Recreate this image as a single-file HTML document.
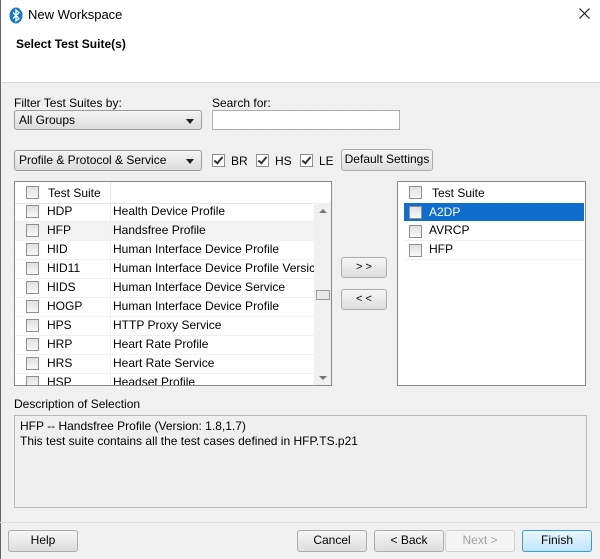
<!DOCTYPE html><html><head><style>
body{margin:0;width:600px;height:559px;overflow:hidden;background:#f0f0f0;font-family:"Liberation Sans",sans-serif;font-size:12px;color:#000;position:relative}
.a{position:absolute}
.btn{position:absolute;border:1px solid #adadad;border-radius:3px;background:linear-gradient(#f6f6f6,#dddddd);text-align:center;box-sizing:border-box;line-height:19px}
.dd{position:absolute;border:1px solid #9a9a9a;border-radius:3px;background:linear-gradient(#f4f4f4,#dcdcdc);box-sizing:border-box;padding-left:4px;line-height:18px}
.dd:after{content:"";position:absolute;right:7px;top:8px;border:4px solid transparent;border-top:5px solid #222;border-bottom:0}
.cb{position:absolute;width:11px;height:11px;border:1px solid #8e8f8f;background:linear-gradient(#e0e0e0,#f8f8f8)}
.ck{position:absolute;width:11px;height:11px;border:1px solid #8e8f8f;background:#fff}
.ck:after{content:"";position:absolute;left:3px;top:0px;width:3px;height:7px;border:solid #333;border-width:0 2px 2px 0;transform:rotate(40deg)}
.row{position:absolute;left:0;width:300px;height:19px;border-bottom:1px solid #f0f0f0;box-sizing:border-box}
.row span{position:absolute;top:1px}
.row .cb{top:2px!important}
</style></head><body>
<div class="a" style="left:0;top:0;width:600px;height:82px;background:#fff;border-bottom:1px solid #d8d8d8"></div>
<svg class="a" style="left:9px;top:7px" width="14" height="17"><ellipse cx="7" cy="8.5" rx="6.5" ry="8" fill="#1a78c8"/><path d="M4 5.5l6 6-3 2.5v-11l3 2.5-6 6" stroke="#fff" stroke-width="1.3" fill="none"/></svg>
<div class="a" style="left:28px;top:7px;font-size:13px">New Workspace</div>
<svg class="a" style="left:579px;top:8px" width="11" height="11"><path d="M0.5 0.5L10.5 10.5M10.5 0.5L0.5 10.5" stroke="#222" stroke-width="1.2"/></svg>
<div class="a" style="left:16px;top:37px;font-weight:bold;font-size:12px">Select Test Suite(s)</div>
<div class="a" style="left:0;top:0;width:1px;height:559px;background:#666"></div>
<div class="a" style="left:14px;top:96px">Filter Test Suites by:</div>
<div class="dd" style="left:14px;top:110px;width:188px;height:20px">All Groups</div>
<div class="a" style="left:212px;top:96px">Search for:</div>
<div class="a" style="left:212px;top:110px;width:188px;height:20px;border:1px solid #abadb3;background:#fff;box-sizing:border-box"></div>
<div class="dd" style="left:14px;top:150px;width:188px;height:21px">Profile &amp; Protocol &amp; Service</div>
<div class="ck" style="left:212px;top:154px"></div><div class="a" style="left:231px;top:154px">BR</div>
<div class="ck" style="left:256px;top:154px"></div><div class="a" style="left:275px;top:154px">HS</div>
<div class="ck" style="left:300px;top:154px"></div><div class="a" style="left:319px;top:154px">LE</div>
<div class="btn" style="left:341px;top:149px;width:92px;height:22px">Default Settings</div>

<div class="a" style="left:14px;top:181px;width:318px;height:205px;border:1px solid #828790;background:#fff;box-sizing:border-box;overflow:hidden">
 <div class="a" style="left:0;top:0;width:316px;height:21px;border-bottom:1px solid #e5e5e5;background:#fff"></div>
 <div class="cb" style="left:11px;top:4px"></div>
 <div class="a" style="left:33px;top:4px">Test Suite</div>
 <div class="a" style="left:95px;top:0;width:1px;height:21px;background:#e5e5e5"></div>
 <div class="a" style="left:0;top:21px;width:300px">
  <div class="row" style="top:0"><div class="cb" style="left:11px;top:3px"></div><span style="left:32px">HDP</span><span style="left:98px">Health Device Profile</span></div>
  <div class="row" style="top:19px;background:#f3f3f3"><div class="cb" style="left:11px;top:3px"></div><span style="left:32px">HFP</span><span style="left:98px">Handsfree Profile</span></div>
  <div class="row" style="top:38px"><div class="cb" style="left:11px;top:3px"></div><span style="left:32px">HID</span><span style="left:98px">Human Interface Device Profile</span></div>
  <div class="row" style="top:57px"><div class="cb" style="left:11px;top:3px"></div><span style="left:32px">HID11</span><span style="left:98px;white-space:nowrap">Human Interface Device Profile Versic</span></div>
  <div class="row" style="top:76px"><div class="cb" style="left:11px;top:3px"></div><span style="left:32px">HIDS</span><span style="left:98px">Human Interface Device Service</span></div>
  <div class="row" style="top:95px"><div class="cb" style="left:11px;top:3px"></div><span style="left:32px">HOGP</span><span style="left:98px">Human Interface Device Profile</span></div>
  <div class="row" style="top:114px"><div class="cb" style="left:11px;top:3px"></div><span style="left:32px">HPS</span><span style="left:98px">HTTP Proxy Service</span></div>
  <div class="row" style="top:133px"><div class="cb" style="left:11px;top:3px"></div><span style="left:32px">HRP</span><span style="left:98px">Heart Rate Profile</span></div>
  <div class="row" style="top:152px"><div class="cb" style="left:11px;top:3px"></div><span style="left:32px">HRS</span><span style="left:98px">Heart Rate Service</span></div>
  <div class="row" style="top:171px"><div class="cb" style="left:11px;top:3px"></div><span style="left:32px">HSP</span><span style="left:98px">Headset Profile</span></div>
 </div>
 <div class="a" style="left:95px;top:21px;width:1px;height:190px;background:#f0f0f0"></div>
 <div class="a" style="left:299px;top:21px;width:17px;height:182px;background:#f0f0f0"></div>
 <div class="a" style="left:304px;top:27px;border:4px solid transparent;border-bottom:4px solid #777;border-top:0"></div>
 <div class="a" style="left:304px;top:194px;border:4px solid transparent;border-top:4px solid #777;border-bottom:0"></div>
 <div class="a" style="left:301px;top:108px;width:12px;height:8px;border:1px solid #999;background:#e8e8e8"></div>
</div>

<div class="btn" style="left:341px;top:257px;width:46px;height:21px;font-size:11px">&gt; &gt;</div>
<div class="btn" style="left:341px;top:289px;width:46px;height:21px;font-size:11px">&lt; &lt;</div>

<div class="a" style="left:397px;top:181px;width:189px;height:205px;border:1px solid #828790;background:#fff;box-sizing:border-box">
 <div class="cb" style="left:11px;top:4px"></div>
 <div class="a" style="left:34px;top:4px">Test Suite</div>
 <div class="a" style="left:6px;top:21px;width:180px;height:18px;background:#0f6ecd"></div>
 <div class="cb" style="left:11px;top:24px"></div>
 <div class="a" style="left:31px;top:23px;color:#fff">A2DP</div>
 <div class="cb" style="left:11px;top:43px"></div><div class="a" style="left:31px;top:41px">AVRCP</div>
 <div class="a" style="left:6px;top:58px;width:180px;height:1px;background:#f0f0f0"></div>
 <div class="cb" style="left:11px;top:62px"></div><div class="a" style="left:31px;top:60px">HFP</div>
 <div class="a" style="left:6px;top:77px;width:180px;height:1px;background:#f0f0f0"></div>
</div>

<div class="a" style="left:14px;top:397px">Description of Selection</div>
<div class="a" style="left:14px;top:415px;width:573px;height:93px;border:1px solid #b8b8b8;background:#efefef;box-sizing:border-box;padding:3px 5px;line-height:15px">HFP -- Handsfree Profile (Version: 1.8,1.7)<br>This test suite contains all the test cases defined in HFP.TS.p21</div>
<div class="a" style="left:0;top:522px;width:600px;height:1px;background:#dcdcdc"></div>
<div class="btn" style="left:8px;top:530px;width:70px;height:22px">Help</div>
<div class="btn" style="left:297px;top:530px;width:70px;height:22px">Cancel</div>
<div class="btn" style="left:374px;top:530px;width:70px;height:22px">&lt; Back</div>
<div class="btn" style="left:445px;top:530px;width:70px;height:22px;background:#f4f4f4;border-color:#d0d0d0;color:#a0a0a0">Next &gt;</div>
<div class="btn" style="left:522px;top:530px;width:70px;height:22px;border-color:#3c9ad8;background:linear-gradient(#eaf6fd,#bee6fd)">Finish</div>
</body></html>
